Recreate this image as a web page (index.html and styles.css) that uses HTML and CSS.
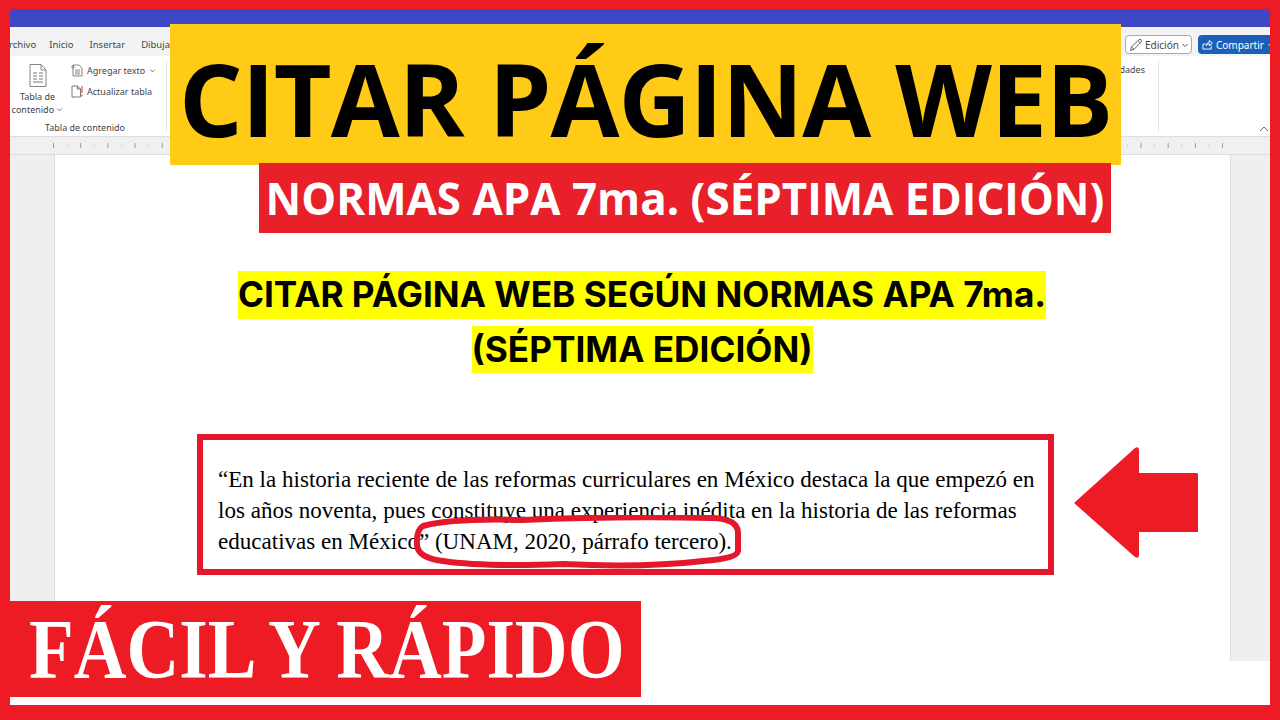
FILE: index.html
```html
<!DOCTYPE html>
<html lang="es">
<head>
<meta charset="utf-8">
<title>Citar página web</title>
<link rel="stylesheet" href="styles.css">
</head>
<body>
<div class="frame">
  <div class="titlebar"></div>
  <div class="menubar">
    <nav class="tabs">
      <span class="tab tab-first">rchivo</span>
      <span class="tab">Inicio</span>
      <span class="tab">Insertar</span>
      <span class="tab">Dibujar</span>
    </nav>
    <div class="actions">
      <span class="edit-btn">
        <svg class="ic-pencil" viewBox="0 0 14 14"><path d="M1.5 12.5 L2.5 9 L10 1.5 Q11 .8 12 1.8 Q13 3 12.3 3.8 L5 11.3 Z M2.5 9 L5 11.3 M9 2.6 L11.3 4.8" fill="none" stroke="#555" stroke-width=".9"/></svg>
        Edición
        <svg class="ic-chev" viewBox="0 0 8 8"><path d="M1.5 3 L4 5.5 L6.5 3" fill="none" stroke="#555" stroke-width="1"/></svg>
      </span>
      <span class="share-btn">
        <svg class="ic-share" viewBox="0 0 12 12"><path d="M1 5.5 H4 M1 5.5 V11 H10 V7 M4.5 7.5 Q5 3.8 8 3.5 V1.5 L11.3 4.5 L8 7.2 V5.3 Q6 5.3 4.5 7.5 Z" fill="none" stroke="#fff" stroke-width="1"/></svg>
        Compartir
        <svg class="ic-chev" viewBox="0 0 8 8"><path d="M1.5 3 L4 5.5 L6.5 3" fill="none" stroke="#fff" stroke-width="1"/></svg>
      </span>
    </div>
  </div>
  <div class="ribbon">
    <section class="group group-toc">
      <div class="group-body">
        <div class="big-btn">
          <svg class="ic-doc" viewBox="0 0 18 23"><path d="M1 .5 H12 L17 6 V22.5 H1 Z M12 .5 V6 H17" fill="#fff" stroke="#777" stroke-width=".9"/><path d="M4 9 H8 M10 9 H14 M4 12 H8 M10 12 H14 M4 15 H8 M10 15 H14 M4 18 H14" stroke="#777" stroke-width="1"/></svg>
          <span>Tabla de</span>
          <span>contenido <svg class="ic-chev-s" viewBox="0 0 8 8"><path d="M1.5 3 L4 5.5 L6.5 3" fill="none" stroke="#555" stroke-width="1"/></svg></span>
        </div>
        <div class="small-btns">
          <span class="small-btn">
            <svg class="ic-small" viewBox="0 0 12 13"><path d="M2 1 H8 L11 4 V12 H2 Z" fill="none" stroke="#666" stroke-width=".8"/><path d="M4 6 H9 M4 8 H9 M4 10 H9" stroke="#666" stroke-width=".8"/><path d="M0 3 H4 M2 1 V5" stroke="#5a9a78" stroke-width=".9"/></svg>
            Agregar texto <svg class="ic-chev-s" viewBox="0 0 8 8"><path d="M1.5 3 L4 5.5 L6.5 3" fill="none" stroke="#555" stroke-width="1"/></svg>
          </span>
          <span class="small-btn">
            <svg class="ic-small" viewBox="0 0 12 13"><path d="M1 1 H6.5 L9.5 4 V12 H1 Z M6.5 1 V4 H9.5" fill="none" stroke="#555" stroke-width=".8"/><path d="M11 1 V8 M11 9.6 V11.4" stroke="#d9534f" stroke-width="1.2"/></svg>
            Actualizar tabla
          </span>
        </div>
      </div>
      <div class="group-label">Tabla de contenido</div>
    </section>
    <div class="ribbon-mid"><span class="ribbon-frag">dades</span></div>
    <div class="ribbon-end">
      <svg class="ic-collapse" viewBox="0 0 10 6"><path d="M1 5 L5 1 L9 5" fill="none" stroke="#666" stroke-width="1"/></svg>
    </div>
  </div>
  <div class="ruler"><div class="ruler-ticks"></div></div>
  <div class="docarea">
    <div class="margin-left"></div>
    <main class="page"></main>
    <div class="margin-right"></div>
  </div>
</div>

<h1 class="title">CITAR PÁGINA WEB</h1>
<div class="subtitle">NORMAS APA 7ma. (SÉPTIMA EDICIÓN)</div>
<h2 class="doc-heading">
  <span class="hl">CITAR PÁGINA WEB SEGÚN NORMAS APA 7ma.</span>
  <span class="hl">(SÉPTIMA EDICIÓN)</span>
</h2>
<blockquote class="quote">“En la historia reciente de las reformas curriculares en México destaca la que empezó en los años noventa, pues constituye una experiencia inédita en la historia de las reformas educativas en México” (UNAM, 2020, párrafo tercero).</blockquote>
<svg class="ring" viewBox="0 0 330 56"><path d="M10 11 Q40 3 110 5 Q200 1 300 3 Q324 4 325 17 L325 36 Q324 44 290 46 Q230 53 150 49 Q70 52 30 46 Q5 43 4 30 Q3 15 10 11 Z" fill="none" stroke="#e3182d" stroke-width="6"/></svg>
<svg class="arrow" viewBox="0 0 126 114"><path d="M1 57 L62 2 Q66 0 66 4 V27 H124 Q125 27 125 29 V86 H66 V109 Q66 113 62 111 Z" fill="#ed1c24"/></svg>
<div class="banner"><span class="banner-text">FÁCIL Y RÁPIDO</span></div>
</body>
</html>
```
FILE: styles.css
```css
* { box-sizing: border-box; }
html, body { margin: 0; padding: 0; }
body { width: 1280px; height: 720px; overflow: hidden; position: relative; background: #fff; font-family: "Open Sans", sans-serif; }

.frame { width: 1280px; height: 720px; border: solid #ed1c24; border-width: 9px 10px 15px 10px; display: flex; flex-direction: column; background: #fff; overflow: hidden; }
.titlebar { height: 18px; background: #3e47c4; flex: none; }
.menubar { height: 29px; background: #f3f3f3; flex: none; display: flex; align-items: center; justify-content: space-between; padding-top: 6px; font-family: "Noto Sans", sans-serif; font-size: 9.5px; color: #444; }
.tabs { display: flex; gap: 16px; margin-left: -1px; }
.tab { white-space: nowrap; }
.tab-first { margin-right: -3px; }
.actions { display: flex; gap: 6px; margin-right: -3px; align-items: center; }
.edit-btn { width: 67px; height: 19px; background: #fff; border: 1px solid #aaa; border-radius: 4px; display: flex; align-items: center; gap: 2px; padding-left: 3px; color: #444; font-size: 10px; }
.share-btn { width: 75px; height: 19px; background: #1b5fb8; border-radius: 4px 0 0 4px; display: flex; align-items: center; gap: 3px; padding-left: 4px; color: #fff; white-space: nowrap; font-size: 10px; }
.ic-pencil { width: 14px; height: 14px; flex: none; }
.ic-share { width: 11px; height: 11px; flex: none; }
.ic-chev { width: 8px; height: 8px; flex: none; }
.ic-chev-s { width: 7px; height: 7px; }

.ribbon { height: 81px; flex: none; background: #fff; display: flex; font-family: "Noto Sans", sans-serif; font-size: 9px; color: #444; border-bottom: 1px solid #ddd; }
.group { width: 157px; display: flex; flex-direction: column; justify-content: space-between; }
.group-toc { border-right: 1px solid #e3e3e3; margin: 5px 0 4px; }
.group-body { display: flex; gap: 6px; }
.big-btn { width: 55px; display: flex; flex-direction: column; align-items: center; line-height: 12.5px; padding-top: 3px; }
.ic-doc { width: 18px; height: 23px; margin-bottom: 4px; }
.small-btns { display: flex; flex-direction: column; gap: 5px; padding-top: 1px; }
.small-btn { display: flex; align-items: center; gap: 4px; height: 16px; white-space: nowrap; }
.ic-small { width: 12px; height: 13px; flex: none; }
.group-label { text-align: center; font-size: 9px; padding-right: 6px; line-height: 14px; margin-bottom: -3px; }
.ribbon-mid { flex: 1; display: flex; justify-content: flex-end; padding-top: 7px; }
.ribbon-frag { margin-right: 13px; }
.ribbon-end { width: 112px; flex: none; border-left: 1px solid #e3e3e3; margin: 5px 0 4px; display: flex; align-items: flex-end; justify-content: flex-end; }
.ic-collapse { width: 10px; height: 6px; margin-right: 1px; }

.ruler { height: 18px; flex: none; background: #f0f0f0; border-bottom: 1px solid #ddd; padding: 0 0 0 43px; display: flex; align-items: center; }
.ruler-ticks { width: 1175px; height: 5px; background-image: linear-gradient(90deg, #999 1px, transparent 1px), linear-gradient(90deg, #aaa 1px, transparent 1px); background-size: 27.2px 5px, 27.2px 1px; background-position: 0 0, 13.6px 2px; background-repeat: repeat-x; }

.docarea { flex: 1; display: grid; grid-template-columns: 45px 1fr 40px; grid-template-rows: 506px; background: #fff; }
.margin-left { background: #efefef; border-right: 1px solid #ddd; }
.margin-right { background: #efefef; border-left: 1px solid #ddd; }
.page { background: #fff; }

.title { position: absolute; left: 170px; top: 24px; width: 951px; height: 141px; margin: 0; background: #ffcb17; color: #000; font-size: 100px; font-weight: 700; line-height: 148px; letter-spacing: -1px; text-align: center; white-space: nowrap; }
.subtitle { position: absolute; left: 259px; top: 163px; width: 852px; height: 70px; background: #e8202a; color: #fff; font-size: 43.9px; font-weight: 700; line-height: 70px; text-align: center; white-space: nowrap; }
.doc-heading { position: absolute; left: 167px; top: 271px; width: 950px; margin: 0; font-family: "Inter", sans-serif; font-size: 35.2px; font-weight: 700; text-align: center; display: flex; flex-direction: column; align-items: center; gap: 7px; color: #000; }
.hl { background: #ffff00; line-height: 47.5px; white-space: nowrap; }
.quote { position: absolute; left: 197px; top: 434px; width: 857px; height: 141px; margin: 0; border: 6px solid #e3182d; padding: 24px 10px 0 15px; font-family: "Liberation Serif", serif; font-size: 23.05px; line-height: 31px; color: #000; }
.ring { position: absolute; left: 413px; top: 515px; width: 330px; height: 56px; }
.arrow { position: absolute; left: 1073px; top: 446px; width: 126px; height: 114px; }
.banner { position: absolute; left: 10px; top: 601px; width: 631px; height: 96px; background: #ed1c24; color: #fff; font-family: "Liberation Serif", serif; font-size: 84px; font-weight: 700; line-height: 98px; padding-left: 19px; white-space: nowrap; }
.banner-text { display: inline-block; transform: scaleX(.87); transform-origin: left center; }
```
